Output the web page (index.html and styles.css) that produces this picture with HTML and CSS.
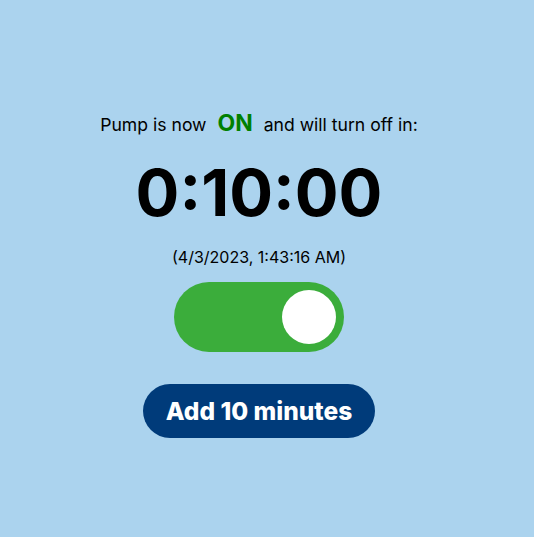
FILE: index.html
```html
<!DOCTYPE html>
<html lang="en">
<head>
    <meta charset="UTF-8">
    <meta name="viewport" content="width=device-width, initial-scale=1.0">
    <title>Pump Timer</title>
    <link rel="stylesheet" href="styles.css">
</head>
<body>
    <div class="container">
        <p class="status">Pump is now <span class="state">ON</span> and will turn off in:</p>
        <div class="countdown">0:10:00</div>
        <p class="until">(4/3/2023, 1:43:16 AM)</p>
        <label class="switch">
            <input type="checkbox" checked>
            <span class="slider"></span>
        </label>
        <button class="btn">Add 10 minutes</button>
    </div>
</body>
</html>
```

FILE: styles.css
```css
* { margin: 0; padding: 0; box-sizing: border-box; }
body {
    font-family: 'Inter', 'Liberation Sans', sans-serif;
    background: #abd3ee;
    color: #000;
    min-height: 100vh;
}
.container {
    width: 518px;
    display: flex;
    flex-direction: column;
    align-items: center;
    padding-top: 110px;
}
.status {
    font-size: 17.6px;
    line-height: 26px;
}
.state {
    color: #008000;
    font-weight: 700;
    font-size: 23px;
    margin: 0 6px;
}
.countdown {
    font-size: 65px;
    font-weight: 700;
    line-height: 80px;
    margin-top: 15px;
}
.until {
    font-size: 16px;
    line-height: 20px;
    margin-top: 14px;
}
.switch {
    position: relative;
    display: inline-block;
    width: 170px;
    height: 70px;
    margin-top: 15px;
}
.switch input { display: none; }
.slider {
    position: absolute;
    top: 0; left: 0; right: 0; bottom: 0;
    background: #ccc;
    border-radius: 35px;
    cursor: pointer;
}
.slider::before {
    content: '';
    position: absolute;
    width: 54px;
    height: 54px;
    left: 8px;
    top: 8px;
    background: #fff;
    border-radius: 50%;
}
input:checked + .slider { background: #3bad3b; }
input:checked + .slider::before { left: 108px; }
.btn {
    margin-top: 32px;
    width: 232px;
    height: 54px;
    border: none;
    border-radius: 27px;
    background: #003b7a;
    color: #fff;
    font-family: inherit;
    font-size: 24.5px;
    font-weight: 800;
    cursor: pointer;
}
```
